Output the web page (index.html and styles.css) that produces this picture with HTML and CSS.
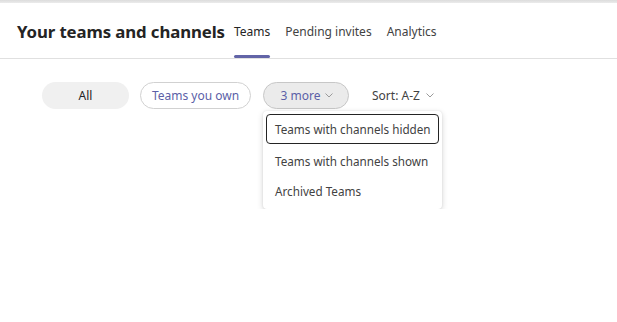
FILE: index.html
```html
<!DOCTYPE html>
<html>
<head>
    <link rel="stylesheet" href="styles.css">
</head>
<body>
<div class="topbar"></div>
<div class="header">
    <h1 class="title">Your teams and channels</h1>
    <div class="tabs">
        <div class="tab active">Teams</div>
        <div class="tab">Pending invites</div>
        <div class="tab">Analytics</div>
    </div>
</div>

<div class="filters">
    <div class="pill pill-all">All</div>
    <div class="pill pill-own">Teams you own</div>
    <div class="more-wrap">
        <div class="pill pill-more">3 more
            <svg class="chev" width="8" height="5" viewBox="0 0 8 5"><path d="M0.5 0.5 L4 4 L7.5 0.5" fill="none" stroke="currentColor" stroke-width="1"></path></svg>
        </div>
        <div class="filter-list">
            <div class="filter-option focused">Teams with channels hidden</div>
            <div class="filter-option">Teams with channels shown</div>
            <div class="filter-option">Archived Teams</div>
        </div>
    </div>
    <div class="sort">Sort: A-Z
        <svg class="chev" width="8" height="5" viewBox="0 0 8 5"><path d="M0.5 0.5 L4 4 L7.5 0.5" fill="none" stroke="currentColor" stroke-width="1"></path></svg>
    </div>
</div>
</body>
</html>
```

FILE: styles.css
```css
body {
  margin: 0;
  font-family: "Noto Sans", "Open Sans", sans-serif;
  color: #242424;
  background: #fff;
}

.topbar {
  height: 3px;
  background: linear-gradient(#dcdcdc, #ebebeb);
}

.header {
  display: flex;
  align-items: flex-end;
  height: 55px;
  padding-left: 17px;
  border-bottom: 1px solid #e0e0e0;
}

.title {
  margin: 0 9px 0 0;
  font-size: 16.8px;
  font-weight: 700;
  line-height: 24px;
  padding-bottom: 14px;
  letter-spacing: -0.1px;
}

.tabs {
  display: flex;
  gap: 15px;
}

.tab {
  font-size: 12px;
  color: #424242;
  line-height: 18px;
  padding-bottom: 17px;
  position: relative;
}

.tab.active {
  color: #242424;
}

.tab.active::after {
  content: "";
  position: absolute;
  left: 0;
  right: 0;
  bottom: 0;
  height: 3px;
  border-radius: 2px;
  background: #6264a7;
}

.filters {
  display: flex;
  align-items: flex-start;
  padding: 23px 0 0 42px;
}

.pill {
  height: 27px;
  box-sizing: border-box;
  border-radius: 14px;
  font-size: 12px;
  display: flex;
  align-items: center;
  justify-content: center;
}

.pill-all {
  width: 87px;
  background: #f0f0f0;
  color: #242424;
  margin-right: 11px;
}

.pill-own {
  width: 111px;
  border: 1px solid #d1d1d1;
  color: #5b5fa7;
  margin-right: 12px;
}

.more-wrap {
  margin-right: 23px;
  width: 86px;
}

.pill-more {
  width: 86px;
  background: #ebebeb;
  border: 1px solid #c7c7c7;
  color: #5b5fa7;
  gap: 5px;
  padding-left: 2px;
}

.chev {
  color: #9a9a9a;
}

.sort {
  height: 27px;
  font-size: 12px;
  color: #424242;
  display: flex;
  align-items: center;
  gap: 6px;
}

.filter-list {
  width: 179px;
  margin-top: 2px;
  background: #fff;
  border-radius: 4px;
  box-shadow: 0 2px 6px rgba(0, 0, 0, 0.16), 0 0 2px rgba(0, 0, 0, 0.1);
  padding: 3px 0 3px;
}

.filter-option {
  font-size: 11.7px;
  color: #424242;
  height: 30px;
  line-height: 30px;
  padding-left: 9px;
  margin: 0 3px;
  white-space: nowrap;
}

.filter-option.focused {
  border: 1px solid #242424;
  border-radius: 4px;
  height: 28px;
  line-height: 28px;
  padding-left: 8px;
  margin-bottom: 2px;
}
```
